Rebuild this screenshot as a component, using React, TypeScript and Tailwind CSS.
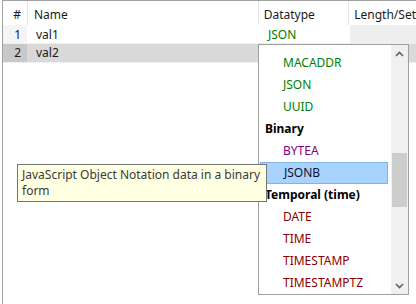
import React from "react";

const font = { fontFamily: '"Segoe UI", "Noto Sans", sans-serif' };

type Item = { label: string; kind: "group" | "item"; color?: string; selected?: boolean };

const items: Item[] = [
  { label: "MACADDR", kind: "item", color: "text-[#008000]" },
  { label: "JSON", kind: "item", color: "text-[#008000]" },
  { label: "UUID", kind: "item", color: "text-[#008000]" },
  { label: "Binary", kind: "group" },
  { label: "BYTEA", kind: "item", color: "text-[#800080]" },
  { label: "JSONB", kind: "item", color: "text-[#10103a]", selected: true },
  { label: "Temporal (time)", kind: "group" },
  { label: "DATE", kind: "item", color: "text-[#8b0000]" },
  { label: "TIME", kind: "item", color: "text-[#8b0000]" },
  { label: "TIMESTAMP", kind: "item", color: "text-[#8b0000]" },
  { label: "TIMESTAMPTZ", kind: "item", color: "text-[#8b0000]" },
];

export default function App() {
  return (
    <div
      className="relative w-[416px] h-[304px] overflow-hidden bg-white text-[12px] text-[#1a1a1a]"
      style={font}
    >
      <div className="border-t border-[#a0a0a0] ml-[2px] border-l h-full">
        {/* header */}
        <div className="flex h-[24px] items-center bg-white">
          <div className="w-[24px] h-full flex items-center justify-end pr-[6px] pt-[3px]">#</div>
          <div className="w-[232px] h-full flex items-center pl-[6px] pt-[3px] border-l border-[#e5e5e5]">Name</div>
          <div className="w-[91px] h-full flex items-center pl-[5px] pt-[3px] border-l border-[#e5e5e5]">Datatype</div>
          <div className="flex-1 h-full flex items-center pl-[5px] pt-[3px] border-l border-[#e5e5e5] whitespace-nowrap">Length/Set</div>
        </div>
        {/* row 1 */}
        <div className="flex h-[19px] items-center border-b border-dotted border-[#e0e0e0]">
          <div className="w-[24px] h-full flex items-center justify-end pr-[6px] pt-[1px] bg-[#f5f5f5]">1</div>
          <div className="w-[232px] h-full flex items-center pl-[9px] pt-[1px]">val1</div>
          <div className="w-[91px] h-full flex items-center pl-[9px] pt-[1px] text-[#008000]">JSON</div>
          <div className="flex-1 h-full bg-[#eeeeee]"></div>
        </div>
        {/* row 2 */}
        <div className="flex h-[19px] items-center border-b border-dotted border-[#e0e0e0]">
          <div className="w-[24px] h-full flex items-center justify-end pr-[6px] bg-[#c8c8c8]">2</div>
          <div className="flex-1 h-full flex items-center pl-[9px] bg-[#d9d9d9]">val2</div>
        </div>
      </div>

      {/* dropdown */}
      <div className="absolute left-[258px] top-[44px] w-[151px] h-[251px] bg-white border border-[#a0a0a0] flex">
        <div className="flex-1 pt-[7px] pl-[1px] pr-[3px] overflow-hidden">
          {items.map((it) => (
            <div
              key={it.label}
              className={
                "h-[22px] flex items-center whitespace-nowrap " +
                (it.kind === "group" ? "pl-[5px] font-bold text-black " : "pl-[23px] ") +
                (it.color ?? "") +
                (it.selected ? " bg-[#a8d3fd] border border-[#7db4ec] pl-[22px]" : "")
              }
            >
              {it.label}
            </div>
          ))}
        </div>
        <div className="w-[17px] h-full bg-[#f0f0f0] flex flex-col items-center">
          <div className="h-[17px] w-full flex items-center justify-center">
            <svg width="9" height="6" viewBox="0 0 9 6">
              <path d="M1 5 L4.5 1.5 L8 5" fill="none" stroke="#606060" strokeWidth="1.6" />
            </svg>
          </div>
          <div className="h-[91px]"></div>
          <div className="w-[15px] h-[54px] bg-[#cdcdcd]"></div>
          <div className="flex-1"></div>
          <div className="h-[17px] w-full flex items-center justify-center">
            <svg width="9" height="6" viewBox="0 0 9 6">
              <path d="M1 1 L4.5 4.5 L8 1" fill="none" stroke="#606060" strokeWidth="1.6" />
            </svg>
          </div>
        </div>
      </div>

      {/* tooltip */}
      <div className="absolute left-[17px] top-[164px] w-[250px] h-[38px] bg-[#ffffe1] border border-[#767676] px-[4px] pt-[2px] leading-[16px] text-[#3a3a3a]">
        JavaScript Object Notation data in a binary form
      </div>
    </div>
  );
}
